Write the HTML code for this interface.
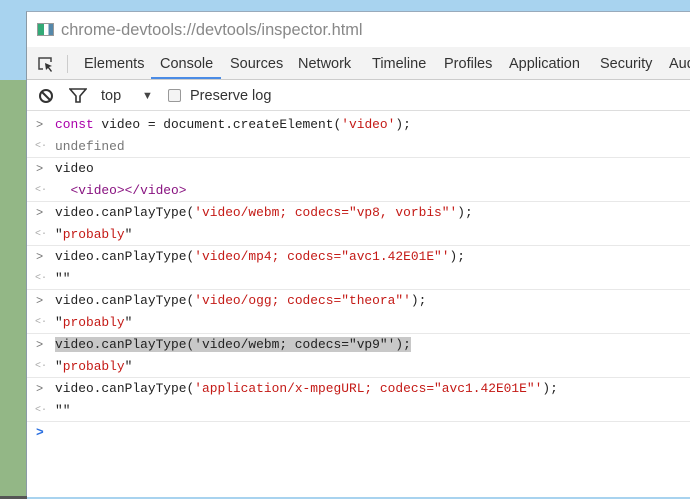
<!DOCTYPE html>
<html><head><style>
*{margin:0;padding:0;box-sizing:border-box}
body{width:690px;height:499px;overflow:hidden;position:relative;background:#a8d3ef;font-family:"Liberation Sans",sans-serif}
.green{position:absolute;left:0;top:80px;width:27px;height:419px;background:#93b786}
.win{position:absolute;left:26px;top:11px;width:664px;height:486px;background:#fff;border-left:1px solid #8a9aa6;border-top:1px solid #9ab}
.title{height:35px;position:relative;color:#888;font-size:16.4px}
.title span{position:absolute;left:34px;top:9px}
.fav{position:absolute;left:10px;top:11px;width:17px;height:13px;border:1px solid #999;background:linear-gradient(90deg,#3a7 0,#3a7 40%,#fff 40%,#fff 70%,#58a 70%)}
.tabs{height:33px;background:#f3f3f3;border-bottom:1px solid #ccc;position:relative;font-size:14.5px;color:#333}
.tabs span{position:absolute;top:9px}
.filt{height:31px;border-bottom:1px solid #ddd;position:relative;font-size:14.5px;color:#333}
.filt span{position:absolute;top:8px}
.con{font-family:"Liberation Mono",monospace;font-size:12.9px;color:#222;padding-top:3px}
.row{border-bottom:1px solid #e8e8e8;height:44px;position:relative}
.l{height:22px;line-height:22px;padding-left:28px;position:relative;white-space:pre}
.l:before{position:absolute;left:9px;color:#777;font-size:12px}
.in:before{content:">"}
.out:before{content:"<·";color:#aaa;font-size:10px;left:8px}
.k{color:#a0a}.s{color:#c41a16}.g{color:#777}.t{color:#881280}
</style></head><body>
<div class="green"></div>
<div class="win">
<div class="title"><div class="fav"></div><span>chrome-devtools://devtools/inspector.html</span></div>
<div class="tabs">
<svg style="position:absolute;left:10px;top:9px" width="18" height="17" viewBox="0 0 18 17"><path d="M6 13H2V2h12v4" fill="none" stroke="#444" stroke-width="1.5"/><path d="M8 7l7 3-3 1 3 4-1 1-3-4-2 2z" fill="#333"/></svg>
<div style="position:absolute;left:40px;top:8px;width:1px;height:18px;background:#ccc"></div>
<span style="left:57px">Elements</span><span style="left:133px">Console</span>
<div style="position:absolute;left:124px;top:30px;width:70px;height:2px;background:#4a8be5"></div>
<span style="left:203px">Sources</span><span style="left:271px">Network</span><span style="left:345px">Timeline</span><span style="left:417px">Profiles</span><span style="left:482px">Application</span><span style="left:573px">Security</span><span style="left:642px">Aud</span>
</div>
<div class="filt">
<svg style="position:absolute;left:11px;top:8px" width="16" height="16" viewBox="0 0 16 16"><circle cx="8" cy="8" r="6" fill="none" stroke="#333" stroke-width="2"/><path d="M4 4l8 8" stroke="#333" stroke-width="2"/></svg>
<svg style="position:absolute;left:42px;top:8px" width="18" height="16" viewBox="0 0 18 16"><path d="M1 1h16l-6 7v6h-4V8z" fill="none" stroke="#333" stroke-width="1.6"/></svg>
<span style="left:74px">top</span>
<span style="left:115px;font-size:11px;top:10px;color:#444">▼</span>
<div style="position:absolute;left:141px;top:9px;width:13px;height:13px;border:1px solid #999;border-radius:2px;background:#f4f4f4"></div>
<span style="left:163px">Preserve log</span>
</div>
<div class="con">
<div class="row"><div class="l in"><span class="k">const</span> video = document.createElement(<span class="s">'video'</span>);</div><div class="l out g">undefined</div></div>
<div class="row"><div class="l in">video</div><div class="l out">  <span class="t">&lt;video&gt;&lt;/video&gt;</span></div></div>
<div class="row"><div class="l in">video.canPlayType(<span class="s">'video/webm; codecs="vp8, vorbis"'</span>);</div><div class="l out">"<span class="s">probably</span>"</div></div>
<div class="row"><div class="l in">video.canPlayType(<span class="s">'video/mp4; codecs="avc1.42E01E"'</span>);</div><div class="l out">""</div></div>
<div class="row"><div class="l in">video.canPlayType(<span class="s">'video/ogg; codecs="theora"'</span>);</div><div class="l out">"<span class="s">probably</span>"</div></div>
<div class="row"><div class="l in"><span style="background:#c8c8c8">video.canPlayType('video/webm; codecs="vp9"');</span></div><div class="l out">"<span class="s">probably</span>"</div></div>
<div class="row"><div class="l in">video.canPlayType(<span class="s">'application/x-mpegURL; codecs="avc1.42E01E"'</span>);</div><div class="l out">""</div></div>
<div class="l" style="color:#2a6fe0"><span style="position:absolute;left:9px;font-weight:bold">&gt;</span></div>
</div>
</div>
<div style="position:absolute;left:0;top:496px;width:27px;height:3px;background:#555"></div>
</body></html>
